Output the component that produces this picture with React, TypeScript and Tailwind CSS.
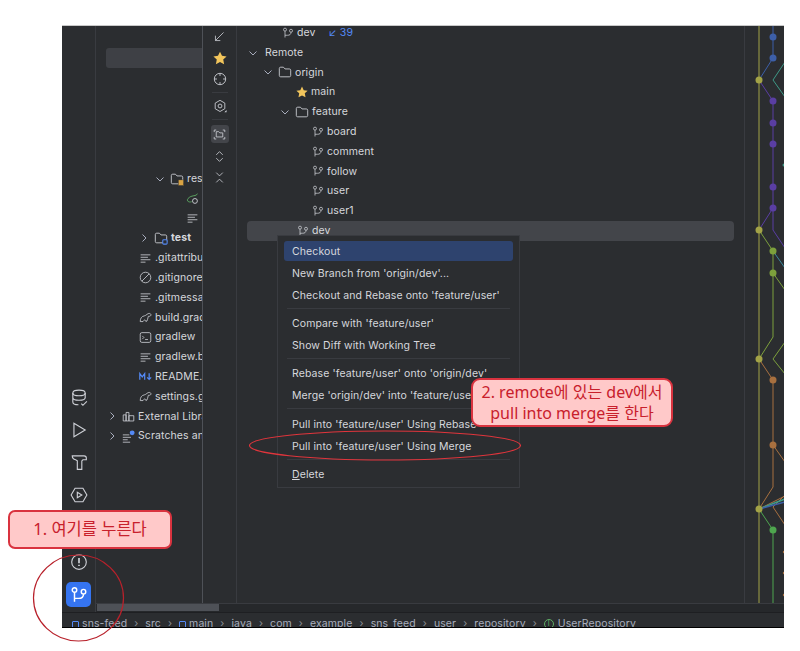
import React from 'react';

const stroke = '#ced0d6';

const Svg = ({ size = 16, children }: { size?: number; children: React.ReactNode }) => (
  <svg width={size} height={size} viewBox="0 0 16 16" fill="none" stroke={stroke} strokeWidth="1" className="shrink-0">
    {children}
  </svg>
);

const BranchIcon = ({ size = 12 }: { size?: number }) => (
  <Svg size={size}>
    <circle cx="4" cy="3.5" r="2" />
    <circle cx="12" cy="5" r="2" />
    <path d="M4 5.5V14M4 11h3.5C10 11 12 10 12 7" />
  </Svg>
);

const Chevron = ({ open }: { open: boolean }) => (
  <svg width="10" height="10" viewBox="0 0 10 10" fill="none" stroke="#a8adbd" strokeWidth="1" className="shrink-0">
    {open ? <path d="M1.5 3.5 5 7l3.5-3.5" /> : <path d="M3.5 1.5 7 5 3.5 8.5" />}
  </svg>
);

const Star = ({ size = 12 }: { size?: number }) => (
  <svg width={size} height={size} viewBox="0 0 16 16" className="shrink-0">
    <path d="M8 .8l2.300 4.700 5.200.7-3.800 3.600 1 5.200L8 12.500l-4.700 2.500 1-5.200L.5 6.200l5.200-.7z" fill="#f2c55c" />
  </svg>
);

const Folder = ({ badge }: { badge?: 'res' | 'src' }) => (
  <svg width="14" height="14" viewBox="0 0 16 16" fill="none" stroke={stroke} strokeWidth="1" className="shrink-0">
    <path d="M1.5 4c0-1 .6-1.5 1.5-1.5h3.2l1.8 2h5c1 0 1.5.6 1.5 1.5v6c0 1-.6 1.5-1.5 1.5H3c-1 0-1.5-.6-1.5-1.5z" />
    {badge === 'res' && <rect x="9.5" y="9" width="6" height="6.5" fill="#d9a343" stroke="#2b2d30" strokeWidth="0.5" />}
    {badge === 'src' && <rect x="10" y="10" width="5" height="5" rx="1" fill="#2b2d30" stroke="#548af7" strokeWidth="1.2" />}
  </svg>
);

const Lines = () => (
  <Svg size={13}>
    <path d="M2 3.5h12M2 6.5h9M2 9.5h12M2 12.5h6" />
  </Svg>
);

const Gradle = () => (
  <Svg size={13}>
    <path d="M1.500 13c0-3.500 1.500-6.500 5-7 2.500-.3 4-3.500 6.500-3 1.500.3 2 1.500 1.500 2.500-.6 1.200-2 1-3 1-.8 2.500-1 6.500-3 6.500 0-1-.5-2-1.500-2S5 13 5 13z" />
  </Svg>
);

type TreeRow = { pad: string; chevron?: boolean; open?: boolean; icon?: React.ReactNode; label?: string; bold?: boolean };

const projectRows: TreeRow[] = [
  { pad: 'pl-[59px]', chevron: true, open: true, icon: <Folder badge="res" />, label: 'resources' },
  {
    pad: 'pl-[90px]',
    icon: (
      <svg width="13" height="13" viewBox="0 0 16 16" fill="none" stroke="#5fad65" strokeWidth="1.1" className="shrink-0">
        <path d="M14 2c-1 3-4 2-8 3.500C3 7 1 9 2 11c.7 1.400 3 1.500 5 1" />
        <circle cx="11" cy="11" r="3" stroke={stroke} />
      </svg>
    ),
    label: 'application.yml',
  },
  { pad: 'pl-[90px]', icon: <Lines />, label: 'logback.xml' },
  { pad: 'pl-[43px]', chevron: true, open: false, icon: <Folder badge="src" />, label: 'test', bold: true },
  { pad: 'pl-[43px]', icon: <Lines />, label: '.gitattributes' },
  {
    pad: 'pl-[43px]',
    icon: (
      <Svg size={13}>
        <circle cx="8" cy="8" r="6.500" />
        <path d="M3.500 12.500l9-9" />
      </Svg>
    ),
    label: '.gitignore',
  },
  { pad: 'pl-[43px]', icon: <Lines />, label: '.gitmessage' },
  { pad: 'pl-[43px]', icon: <Gradle />, label: 'build.gradle' },
  {
    pad: 'pl-[43px]',
    icon: (
      <Svg size={13}>
        <rect x="1.500" y="2" width="13" height="12" rx="2" />
        <path d="M4 6l2 2-2 2M7.500 10.500H11" />
      </Svg>
    ),
    label: 'gradlew',
  },
  { pad: 'pl-[43px]', icon: <Lines />, label: 'gradlew.bat' },
  {
    pad: 'pl-[43px]',
    icon: (
      <svg width="13" height="13" viewBox="0 0 16 16" fill="none" stroke="#548af7" strokeWidth="1.500" className="shrink-0">
        <path d="M1 12V4.500l3 4 3-4V12M12.500 4v7.500M10 9l2.500 2.500L15 9" />
      </svg>
    ),
    label: 'README.md',
  },
  { pad: 'pl-[43px]', icon: <Gradle />, label: 'settings.gradle' },
  {
    pad: 'pl-[11px]',
    chevron: true,
    open: false,
    icon: (
      <Svg size={13}>
        <path d="M1.500 13.500V6h3.500v7.500zM5 13.500V3h3.500v10.500zM8.500 13.500V7H14.500v6.500z" />
      </Svg>
    ),
    label: 'External Libraries',
  },
  {
    pad: 'pl-[11px]',
    chevron: true,
    open: false,
    icon: (
      <svg width="13" height="13" viewBox="0 0 16 16" fill="none" stroke={stroke} className="shrink-0">
        <path d="M1 6h8M1 9h10M1 12h6M1 15h9" />
        <circle cx="12.500" cy="3.500" r="3" fill="#548af7" stroke="none" />
      </svg>
    ),
    label: 'Scratches and Consoles',
  },
];

const branchRows: TreeRow[] = [
  { pad: 'pl-[1px]', chevron: true, open: true, label: 'Remote' },
  { pad: 'pl-[16px]', chevron: true, open: true, icon: <Folder />, label: 'origin' },
  { pad: 'pl-[49px]', icon: <Star />, label: 'main' },
  { pad: 'pl-[33px]', chevron: true, open: true, icon: <Folder />, label: 'feature' },
  { pad: 'pl-[65px]', icon: <BranchIcon />, label: 'board' },
  { pad: 'pl-[65px]', icon: <BranchIcon />, label: 'comment' },
  { pad: 'pl-[65px]', icon: <BranchIcon />, label: 'follow' },
  { pad: 'pl-[65px]', icon: <BranchIcon />, label: 'user' },
  { pad: 'pl-[65px]', icon: <BranchIcon />, label: 'user1' },
];

const Row = ({ row }: { row: TreeRow }) => (
  <div className={`h-[19.8px] flex items-center gap-[3px] whitespace-nowrap ${row.pad}`}>
    {row.chevron && <Chevron open={!!row.open} />}
    {row.icon && <span className={row.chevron ? 'ml-[2px]' : ''}>{row.icon}</span>}
    <span className={`${row.bold ? 'font-bold' : ''} ${row.chevron && !row.icon ? 'ml-[4px]' : ''}`}>{row.label}</span>
  </div>
);

const Divider = ({ className = '' }: { className?: string }) => <div className={`h-px bg-[#393b40] ${className}`} />;

const MenuItem = ({ children, active }: { children: React.ReactNode; active?: boolean }) => (
  <div className={`h-[22px] flex items-center ${active ? '' : 'px-[14px] pt-px'}`}>
    {active ? (
      <div className="h-[20px] w-full mx-[6px] px-[8px] pt-px rounded-[3px] bg-[#2e436e] flex items-center">{children}</div>
    ) : (
      children
    )}
  </div>
);

const MenuSep = ({ tall }: { tall?: boolean }) => (
  <div className={`${tall ? 'h-[7px]' : 'h-[6px]'} pt-[1.5px] px-[9px]`}>
    <Divider />
  </div>
);

const breadcrumbs = ['src', 'main', 'java', 'com', 'example', 'sns_feed', 'user', 'repository'];

const Graph = () => (
  <svg viewBox="745 26 39 577" className="w-[39px] h-[577px]" fill="none" strokeWidth="1">
    <path d="M759 26V603" stroke="#a3a347" />
    <path d="M773 26V58L759 80" stroke="#3d5fa8" />
    <path d="M785 62 773 80 785 97" stroke="#3f9a86" />
    <path d="M759 80 773 101V208L759 230M773 208V230L785 248" stroke="#5a3ea3" />
    <path d="M759 230 773 251V337L759 359M773 273 785 290" stroke="#7da03c" />
    <path d="M773 251 785 268" stroke="#3c8a9e" />
    <path d="M785 342 773 359 785 374" stroke="#7da03c" />
    <path d="M759 359 773 380V487L759 509M773 445 785 462" stroke="#a8703f" />
    <path d="M785 495 773 507 785 525" stroke="#a8703f" />
    <path d="M759 509 785 496" stroke="#a8703f" />
    <path d="M759 509 785 499" stroke="#3f9a86" strokeWidth="1.500" />
    <path d="M759 509 785 502" stroke="#3d5fa8" strokeWidth="1.500" />
    <path d="M759 509 773 530V603" stroke="#4ea64e" />
    <circle cx="773" cy="37" r="3.500" fill="#3d5fa8" />
    <circle cx="773" cy="58" r="3.500" fill="#3d5fa8" />
    <circle cx="759" cy="80" r="3.500" fill="#a3a347" />
    <circle cx="773" cy="101" r="3.500" fill="#5a3ea3" />
    <circle cx="773" cy="123" r="3.500" fill="#5a3ea3" />
    <circle cx="773" cy="144" r="3.500" fill="#5a3ea3" />
    <circle cx="773" cy="187" r="3.500" fill="#5a3ea3" />
    <circle cx="773" cy="208" r="3.500" fill="#5a3ea3" />
    <circle cx="759" cy="230" r="3.500" fill="#a3a347" />
    <circle cx="773" cy="251" r="3.500" fill="#7da03c" />
    <circle cx="773" cy="273" r="3.500" fill="#7da03c" />
    <circle cx="759" cy="359" r="3.500" fill="#a3a347" />
    <circle cx="773" cy="380" r="3.500" fill="#a8703f" />
    <circle cx="773" cy="445" r="3.500" fill="#a8703f" />
    <circle cx="759" cy="509" r="3.500" fill="#a3a347" />
    <circle cx="773" cy="530" r="3.500" fill="#4ea64e" />
    <circle cx="784" cy="165" r="1.500" fill="#3f9a86" />
    <circle cx="784" cy="552" r="1.200" fill="#a8703f" />
    <circle cx="784" cy="573" r="1.200" fill="#a8703f" />
    <circle cx="784" cy="595" r="1.200" fill="#a8703f" />
  </svg>
);

const App: React.FC = () => {
  return (
    <div className="relative w-[800px] h-[651px] overflow-hidden bg-white pt-[25px] pl-[62px] font-['Inter','Noto_Sans',sans-serif] text-[10.5px] tracking-[0.1px] text-[#d6d8dd]">
      <div className="w-[722px] h-[603px] bg-[#2b2d30] border-t border-t-[#c9c9c9] border-b border-b-black flex flex-col overflow-hidden">
        <div className="flex-1 min-h-0 flex">
          {/* Left stripe */}
          <div className="w-[34px] shrink-0 flex flex-col items-center justify-end pb-[5px] border-r border-[#393b40]">
            <div className="h-[33px] flex items-center">
              <Svg size={18}>
                <ellipse cx="8" cy="3.500" rx="5.500" ry="2.500" />
                <path d="M2.500 3.500v8c0 1.500 2.500 2.500 5 2.500M13.500 3.500V8M2.500 7.500c0 1.500 2.500 2.500 5.500 2.500s5.500-1 5.500-2.500M10 13l1.500 1.500L15 11" />
              </Svg>
            </div>
            <div className="h-[31px] flex items-center">
              <Svg size={18}>
                <path d="M3.500 2v12l10-6z" />
              </Svg>
            </div>
            <div className="h-[33px] flex items-center">
              <Svg size={18}>
                <path d="M2 2.500h10.500c1.200 0 2 .8 2 2v1.500h-3L10.500 7v7.500h-4V7L5 6c-1.500-.2-3-1.500-3-3.500z" />
              </Svg>
            </div>
            <div className="h-[33px] flex items-center">
              <Svg size={18}>
                <path d="M4.500 2h7L15 8l-3.500 6h-7L1 8z" />
                <path d="M6.500 5.500v5l4-2.500z" />
              </Svg>
            </div>
            <div className="h-[34px]" />
            <div className="h-[33px] flex items-center">
              <Svg size={18}>
                <circle cx="8" cy="8" r="6.500" />
                <path d="M8 4.500v4.500M8 10.500v1" strokeWidth="1.500" />
              </Svg>
            </div>
            <div className="w-[25px] h-[25px] mt-[4px] rounded-[5px] bg-[#3574f0] flex items-center justify-center">
              <svg width="18" height="18" viewBox="0 0 16 16" fill="none" stroke="#fff" strokeWidth="1.300">
                <circle cx="4" cy="3.500" r="2" />
                <circle cx="12" cy="5" r="2" />
                <path d="M4 5.500V14M4 11h3.500C10 11 12 10 12 7" />
              </svg>
            </div>
          </div>

          <div className="flex-1 min-w-0 flex flex-col">
            <div className="flex-1 min-h-0 flex">
              {/* Project tree */}
              <div className="w-[107px] shrink-0 overflow-hidden border-r border-[#4e5157]">
                <div className="mt-[22px] ml-[10px] h-[20px] rounded-l-[3px] bg-[#3e4045]" />
                <div className="mt-[101px]">
                  {projectRows.map((row, i) => (
                    <Row key={i} row={row} />
                  ))}
                </div>
              </div>

              {/* Branch toolbar */}
              <div className="w-[34px] shrink-0 flex flex-col items-center pt-[2px] border-r border-[#393b40]">
                <div className="h-[16px] flex items-center">
                  <Svg size={13}>
                    <path d="M13 3 3 13M3 7v6h6" />
                  </Svg>
                </div>
                <div className="h-[22px] mt-[3px] flex items-center">
                  <Star size={14} />
                </div>
                <div className="h-[20px] flex items-center">
                  <Svg size={14}>
                    <circle cx="8" cy="8" r="6.500" />
                    <path d="M8 1.500v3M8 11.500v3M1.500 8h3M11.500 8h3" />
                  </Svg>
                </div>
                <Divider className="w-[16px] mt-[3px]" />
                <div className="h-[26px] flex items-center">
                  <Svg size={14}>
                    <path d="M8 1.500l5.500 3.200v6.400L8 14.300l-5.500-3.200V4.700z" />
                    <circle cx="8" cy="8" r="2.200" />
                    <path d="M13 15l2.500-2.500V15z" fill={stroke} stroke="none" />
                  </Svg>
                </div>
                <Divider className="w-[16px]" />
                <div className="w-[18px] h-[18px] mt-[5px] rounded-[3px] bg-[#43454a] flex items-center justify-center">
                  <Svg size={13}>
                    <path d="M1.500 5V2.500H4M12 2.500h2.500V5M1.500 11v2.500H4M12 13.500h2.500V11M4 11V4.500h3l1.500 1.500H12V11z" />
                  </Svg>
                </div>
                <div className="h-[22px] mt-[2px] flex items-center">
                  <Svg size={13}>
                    <path d="M4 6l4-4 4 4M4 10l4 4 4-4" />
                  </Svg>
                </div>
                <div className="h-[21px] flex items-center">
                  <Svg size={13}>
                    <path d="M4 2l4 4 4-4M4 14l4-4 4 4" />
                  </Svg>
                </div>
              </div>

              {/* Branch tree */}
              <div className="relative flex-1 min-w-0 border-r border-[#393b40]">
                <div className="-mt-[3px] px-[10px]">
                  <div className="h-[19.8px] pl-[35px] flex items-center gap-[3px] whitespace-nowrap">
                    <BranchIcon />
                    <span>dev</span>
                    <span className="ml-[10px] text-[#548af7]">↙ 39</span>
                  </div>
                  {branchRows.map((row, i) => (
                    <Row key={i} row={row} />
                  ))}
                  <div className="h-[19.8px] pl-[50px] rounded-[4px] bg-[#43454a] flex items-center gap-[3px]">
                    <BranchIcon />
                    <span>dev</span>
                  </div>
                </div>

                {/* Context menu */}
                <div className="absolute left-[40px] top-[209px] w-[243px] h-[253px] py-[4px] bg-[#2b2d30] border border-[#393b40] whitespace-nowrap">
                  <MenuItem active>Checkout</MenuItem>
                  <MenuItem>New Branch from 'origin/dev'...</MenuItem>
                  <MenuItem>Checkout and Rebase onto 'feature/user'</MenuItem>
                  <MenuSep />
                  <MenuItem>Compare with 'feature/user'</MenuItem>
                  <MenuItem>Show Diff with Working Tree</MenuItem>
                  <MenuSep />
                  <MenuItem>Rebase 'feature/user' onto 'origin/dev'</MenuItem>
                  <MenuItem>Merge 'origin/dev' into 'feature/user'</MenuItem>
                  <MenuSep tall />
                  <MenuItem>Pull into 'feature/user' Using Rebase</MenuItem>
                  <MenuItem>Pull into 'feature/user' Using Merge</MenuItem>
                  <MenuSep />
                  <MenuItem>
                    <span>
                      <u>D</u>elete
                    </span>
                  </MenuItem>
                </div>
              </div>

              {/* Commit graph */}
              <div className="w-[39px] shrink-0 overflow-hidden">
                <Graph />
              </div>
            </div>

            {/* Horizontal scrollbar */}
            <div className="h-[9px] shrink-0 bg-[#26282b] border-t border-[#393b40]">
              <div className="w-[122px] h-[7px] ml-px bg-[#4e5157]" />
            </div>
          </div>
        </div>

        {/* Breadcrumbs */}
        <div className="h-[15px] shrink-0 pl-[10px] pt-[8px] flex items-center gap-[7px] whitespace-nowrap text-[#a8adbd] border-t border-[#1e1f22]">
          <span className="w-[7px] h-[7px] -mr-[4px] rounded-[1px] border border-[#548af7]" />
          <span>sns-feed</span>
          {breadcrumbs.map((b, i) => (
            <React.Fragment key={b}>
              <span className="text-[#8a8d94]">›</span>
              {i === 1 && <span className="w-[7px] h-[7px] -mr-[4px] rounded-[1px] border border-[#548af7]" />}
              <span>{b}</span>
            </React.Fragment>
          ))}
          <span className="text-[#8a8d94]">›</span>
          <span className="w-[10px] h-[10px] -mr-[3px] rounded-full border border-[#5fad65] text-[7px] leading-[8px] text-center text-[#5fad65]">I</span>
          <span>UserRepository</span>
        </div>
      </div>

      {/* Annotations */}
      <div className="absolute left-[8px] top-[510px] w-[164px] h-[39px] rounded-[7px] bg-[#ffc9c9] border-2 border-[#d9333f] flex items-center justify-center font-['Noto_Sans','Noto_Sans_CJK_KR',sans-serif] text-[16.5px] tracking-normal text-[#c8202c]">
        1. 여기를 누른다
      </div>
      <div className="absolute left-[471px] top-[378px] w-[202px] h-[49px] rounded-[9px] bg-[#ffc9c9] border-2 border-[#d9333f] flex items-center justify-center text-center leading-[21px] font-['Noto_Sans','Noto_Sans_CJK_KR',sans-serif] text-[16px] tracking-normal text-[#c8202c]">
        2. remote에 있는 dev에서
        <br />
        pull into merge를 한다
      </div>
      <svg className="absolute left-0 top-0 pointer-events-none" width="800" height="651" fill="none">
        <ellipse cx="78.500" cy="598" rx="45" ry="43" stroke="#b8212b" strokeWidth="1.200" />
        <ellipse cx="385" cy="445.500" rx="135.500" ry="14.500" stroke="#e0353c" strokeWidth="1.200" />
      </svg>
    </div>
  );
};

export default App;
